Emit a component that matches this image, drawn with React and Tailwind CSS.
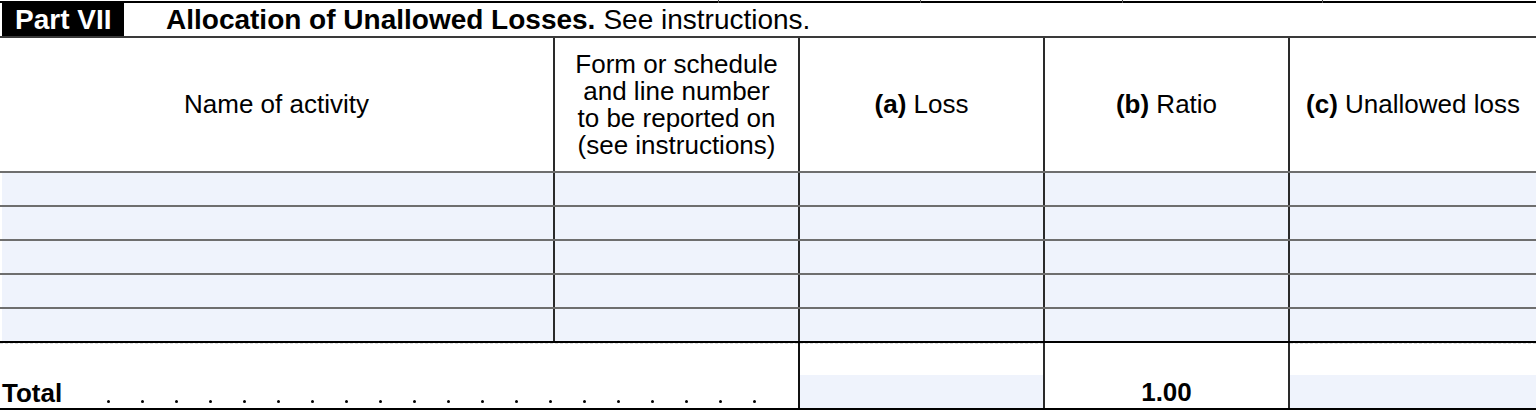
import React from "react";

const rowCols = ["", "", "", "", ""];

const HeaderCell = ({ children, first }) => (
  <div
    className={`flex items-center justify-center text-center text-[26px] leading-[27px] text-black ${
      first ? "" : "border-l-2 border-[#2a2a2a]"
    }`}
  >
    {children}
  </div>
);

const DataRow = ({ last }) => (
  <div
    className={`grid grid-cols-[553px_245px_245px_245px_1fr] h-[34px] ${
      last ? "border-b-2 border-black" : "border-b-2 border-[#6e6e6e]"
    }`}
  >
    {rowCols.map((_, i) => (
      <div
        key={i}
        className={`bg-[#eff3fc] ${i === 0 ? "ml-[2px]" : "border-l-2 border-[#2a2a2a]"}`}
      ></div>
    ))}
  </div>
);

const App = () => {
  const dots = Array.from({ length: 20 });

  return (
    <div className="w-[1536px] h-[412px] bg-white overflow-hidden font-['Liberation_Sans',Arial,sans-serif] text-black">
      {/* top rule with stubs from the part above */}
      <div className="relative mt-[1px] h-[2px] bg-black">
        <span className="absolute left-[718px] -top-[1px] h-[3px] w-[1px] bg-[#555]"></span>
        <span className="absolute left-[920px] -top-[1px] h-[3px] w-[1px] bg-[#555]"></span>
        <span className="absolute left-[1122px] -top-[1px] h-[3px] w-[1px] bg-[#555]"></span>
        <span className="absolute left-[1322px] -top-[1px] h-[3px] w-[1px] bg-[#555]"></span>
      </div>

      {/* part title */}
      <div className="flex h-[35px] border-b-2 border-[#3a3a3a]">
        <div className="ml-[2px] w-[122px] h-full bg-black flex items-center pl-[13px]">
          <span className="text-white font-bold text-[28px] leading-none">Part VII</span>
        </div>
        <div className="flex items-center pl-[42px] text-[28px] leading-none">
          <span className="font-bold">Allocation of Unallowed Losses.</span>
          <span className="ml-[8px]">See instructions.</span>
        </div>
      </div>

      {/* column headings */}
      <div className="grid grid-cols-[553px_245px_245px_245px_1fr] h-[135px] border-b-2 border-[#6e6e6e]">
        <HeaderCell first>Name of activity</HeaderCell>
        <HeaderCell>
          <span>
            Form or schedule
            <br />
            and line number
            <br />
            to be reported on
            <br />
            (see instructions)
          </span>
        </HeaderCell>
        <HeaderCell>
          <span>
            <b>(a)</b> Loss
          </span>
        </HeaderCell>
        <HeaderCell>
          <span>
            <b>(b)</b> Ratio
          </span>
        </HeaderCell>
        <HeaderCell>
          <span>
            <b>(c)</b> Unallowed loss
          </span>
        </HeaderCell>
      </div>

      {/* entry rows */}
      <DataRow />
      <DataRow />
      <DataRow />
      <DataRow />
      <DataRow last />

      {/* total */}
      <div className="grid grid-cols-[798px_245px_245px_1fr] h-[67px] border-b-2 border-black">
        <div className="flex items-end pb-[2px] border-t border-dashed border-[#dcdcdc]">
          <span className="ml-[2px] w-[105px] font-bold text-[26px] leading-[26px]">Total</span>
          <div className="flex mb-[3px]">
            {dots.map((_, i) => (
              <span key={i} className="w-[34px] flex">
                <span className="w-[3px] h-[3px] rounded-full bg-black"></span>
              </span>
            ))}
          </div>
        </div>
        <div className="flex flex-col border-l-2 border-[#111]">
          <div className="h-[32px] border-t border-dashed border-[#dcdcdc]"></div>
          <div className="flex-1 bg-[#eff3fc]"></div>
        </div>
        <div className="flex items-end justify-center pb-[3px] border-l-2 border-[#2a2a2a]">
          <span className="font-bold text-[26px] leading-[26px]">1.00</span>
        </div>
        <div className="flex flex-col border-l-2 border-[#2a2a2a]">
          <div className="h-[32px] border-t border-dashed border-[#dcdcdc]"></div>
          <div className="flex-1 bg-[#eff3fc]"></div>
        </div>
      </div>
    </div>
  );
};

export default App;
